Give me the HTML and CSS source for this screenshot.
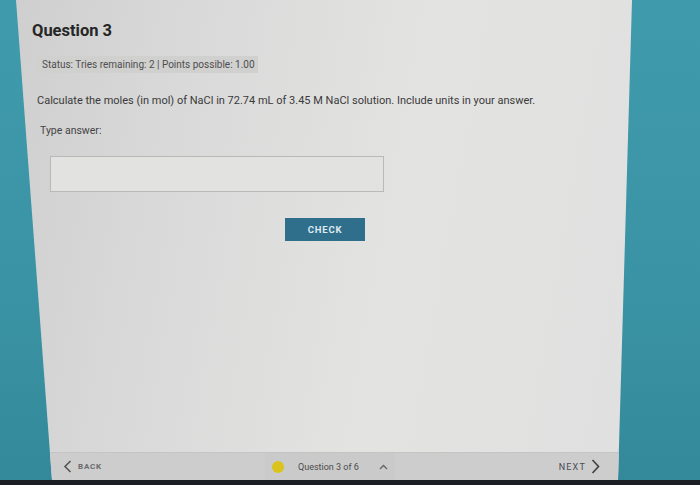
FILE: index.html
```html
<!DOCTYPE html>
<html>
<head>
<meta charset="utf-8">
<link rel="stylesheet" href="styles.css">
</head>
<body>
<div class="screen">
  <div class="panel">
    <div class="content">
      <h1 class="title">Question 3</h1>
      <div class="status">Status: Tries remaining: 2 | Points possible: 1.00</div>
      <p class="question">Calculate the moles (in mol) of NaCl in 72.74 mL of 3.45 M NaCl solution. Include units in your answer.</p>
      <p class="label">Type answer:</p>
      <div class="answer"></div>
      <div class="check-row"><button class="check">CHECK</button></div>
    </div>
    <div class="footer">
      <div class="back">
        <svg class="chev" width="9" height="13" viewBox="0 0 9 13"><path d="M7.5 1 L2 6.5 L7.5 12" fill="none" stroke="#555" stroke-width="1.6"/></svg>
        <span>BACK</span>
      </div>
      <div class="middle">
        <span class="dot"></span>
        <span class="qnum">Question 3 of 6</span>
        <svg class="up" width="9" height="6" viewBox="0 0 9 6"><path d="M1 5 L4.5 1.5 L8 5" fill="none" stroke="#666" stroke-width="1.4"/></svg>
      </div>
      <div class="next">
        <span>NEXT</span>
        <svg class="chev" width="9" height="15" viewBox="0 0 9 15"><path d="M1.5 1 L7.5 7.5 L1.5 14" fill="none" stroke="#444" stroke-width="1.7"/></svg>
      </div>
    </div>
  </div>
</div>
<div class="bezel"></div>
</body>
</html>
```
FILE: styles.css
```css
html, body {
  margin: 0;
  padding: 0;
}
body {
  width: 700px;
  height: 485px;
  overflow: hidden;
  background: linear-gradient(to bottom, #3f9bac 0%, #3a93a4 60%, #33899a 100%);
  font-family: Roboto, "Liberation Sans", sans-serif;
}
.screen {
  height: 480px;
  display: flex;
}
.panel {
  margin-left: 16px;
  width: 616px;
  height: 480px;
  display: flex;
  flex-direction: column;
  clip-path: polygon(0 0, 100% 0, calc(100% - 14px) 100%, 36px 100%);
  background: linear-gradient(100deg, #cfcfcf 0%, #d9d9d9 25%, #e3e3e2 60%, #e0e0e0 100%);
}
.content {
  padding: 21px 0 0 16px;
  flex: 1;
}
.title {
  margin: 0;
  font-size: 16.5px;
  line-height: 20px;
  font-weight: 700;
  color: #262626;
}
.status {
  margin: 15px 0 0 5px;
  width: 221px;
  height: 17px;
  line-height: 17px;
  box-sizing: border-box;
  padding-left: 5px;
  background: #d0d0cf;
  font-size: 10px;
  color: #4e4e4e;
}
.question {
  margin: 21px 0 0 5px;
  font-size: 11px;
  line-height: 14px;
  color: #3a3a3a;
}
.label {
  margin: 16px 0 0 8px;
  font-size: 10.5px;
  line-height: 14px;
  color: #444;
}
.answer {
  margin: 18px 0 0 18px;
  width: 334px;
  height: 36px;
  box-sizing: border-box;
  border: 1px solid #b9b9b9;
  background: #e2e2e1;
}
.check-row {
  margin: 26px 0 0 253px;
}
.check {
  width: 80px;
  height: 23px;
  border: 0;
  padding: 0;
  background: #2f6f8c;
  color: #dfeaf0;
  font-family: Roboto, "Liberation Sans", sans-serif;
  font-size: 9.5px;
  font-weight: 700;
  letter-spacing: 0.8px;
}
.footer {
  height: 27px;
  border-top: 1px solid #c4c4c4;
  background: #cdcdcd;
  display: grid;
  grid-template-columns: 249px 130px 1fr;
  align-items: center;
}
.back {
  display: flex;
  align-items: center;
  gap: 6px;
  padding-left: 47px;
  font-size: 8px;
  letter-spacing: 0.8px;
  font-weight: 700;
  color: #6a6a6a;
}
.middle {
  height: 100%;
  display: flex;
  align-items: center;
  background: #cacaca;
  padding-left: 7px;
}
.dot {
  width: 12px;
  height: 12px;
  border-radius: 50%;
  background: #d9c31c;
}
.qnum {
  margin-left: 14px;
  font-size: 9px;
  color: #4a4a4a;
}
.up {
  margin-left: 20px;
}
.next {
  display: flex;
  align-items: center;
  justify-content: flex-end;
  gap: 5px;
  padding-right: 32px;
  font-size: 9px;
  letter-spacing: 1.2px;
  color: #4a4a55;
}
.bezel {
  height: 5px;
  background: #1b1f25;
}
```
